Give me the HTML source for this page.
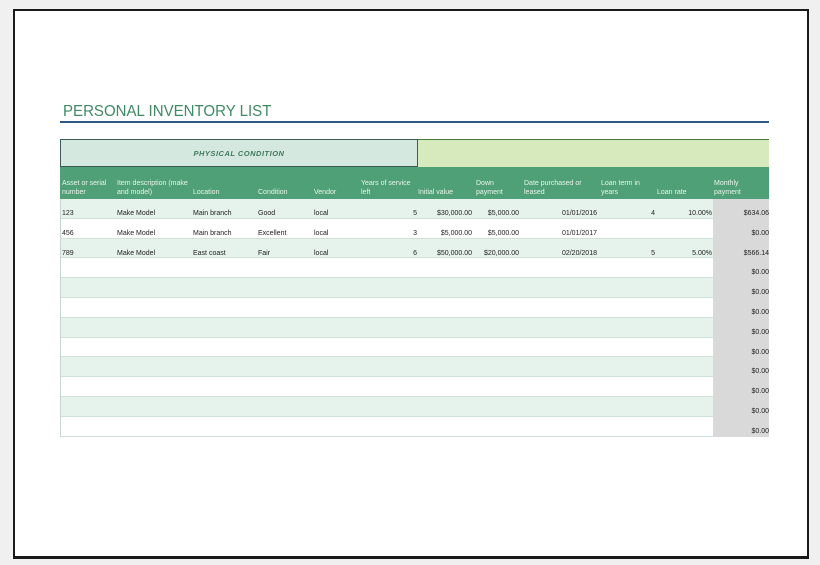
<!DOCTYPE html>
<html><head><style>
*{margin:0;padding:0;box-sizing:border-box}
body{width:820px;height:565px;background:#f0f0f0;position:relative;overflow:hidden;font-family:"Liberation Sans",sans-serif}
#page{position:absolute;left:13px;top:9px;width:796px;height:550px;background:#fff;border:2px solid #1a1a1a;border-right-width:2px;border-bottom-width:3px}
.a{position:absolute}
.t{font-size:7px;color:#222;white-space:nowrap}
.h{font-size:7px;color:#e8f4ec;line-height:9px}
.r{text-align:right}
</style></head><body>
<div id="page"></div>
<div class="a" style="left:63px;top:103px;font-size:16px;color:#3f8a63;transform:scaleX(0.94);transform-origin:left top">PERSONAL INVENTORY LIST</div>
<div class="a" style="left:60px;top:121px;width:709px;height:2px;background:#2e5a86"></div>
<div class="a" style="left:60px;top:139px;width:358px;height:28px;background:#d4e8e0;border:1px solid #3c5c54"></div>
<div class="a" style="left:60px;top:149px;width:358px;text-align:center;font-size:7.5px;font-weight:bold;font-style:italic;color:#3f7a5a;letter-spacing:0.5px">PHYSICAL CONDITION</div>
<div class="a" style="left:418px;top:139px;width:351px;height:28px;background:#d6eabd;border-top:1px solid #4a7a3a"></div>
<div class="a" style="left:60px;top:167px;width:709px;height:32px;background:#50a077"></div>
<div class="a" style="left:60px;top:199px;width:709px;height:238px;border:1px solid #c8d8d0;border-top:none;background:#fff"></div>
<div id="rows"></div>
<div class="a h" style="left:62px;top:179px">Asset or serial<br>number</div>
<div class="a h" style="left:117px;top:179px">Item description (make<br>and model)</div>
<div class="a h" style="left:193px;top:188px">Location</div>
<div class="a h" style="left:258px;top:188px">Condition</div>
<div class="a h" style="left:314px;top:188px">Vendor</div>
<div class="a h" style="left:361px;top:179px">Years of service<br>left</div>
<div class="a h" style="left:418px;top:188px">Initial value</div>
<div class="a h" style="left:476px;top:179px">Down<br>payment</div>
<div class="a h" style="left:524px;top:179px">Date purchased or<br>leased</div>
<div class="a h" style="left:601px;top:179px">Loan term in<br>years</div>
<div class="a h" style="left:657px;top:188px">Loan rate</div>
<div class="a h" style="left:714px;top:179px">Monthly<br>payment</div>
<script>
var h='',y0=199,rh=19.8;
for(var k=0;k<12;k++){var y=y0+k*rh;
 if(k%2==0)h+='<div class="a" style="left:61px;top:'+y+'px;width:652px;height:'+rh+'px;background:#e6f2ec;border-bottom:1px solid #d0e2d8"></div>';
 else h+='<div class="a" style="left:61px;top:'+y+'px;width:652px;height:'+rh+'px;border-bottom:1px solid #d0e2d8"></div>';
}
h+='<div class="a" style="left:713px;top:199px;width:56px;height:238px;background:#d9d9d9"></div>';
var d=[["123","Make Model","Main branch","Good","local","5","$30,000.00","$5,000.00","01/01/2016","4","10.00%","$634.06"],
["456","Make Model","Main branch","Excellent","local","3","$5,000.00","$5,000.00","01/01/2017","","","$0.00"],
["789","Make Model","East coast","Fair","local","6","$50,000.00","$20,000.00","02/20/2018","5","5.00%","$566.14"]];
for(var k=0;k<12;k++){var y=y0+k*rh+11;
 if(k<3){var r=d[k];
  [[62,r[0]],[117,r[1]],[193,r[2]],[258,r[3]],[314,r[4]]].forEach(function(c){h+='<div class="a t" style="left:'+c[0]+'px;top:'+y+'px">'+c[1]+'</div>'});
  [[417,r[5]],[472,r[6]],[519,r[7]],[597,r[8]],[655,r[9]],[712,r[10]]].forEach(function(c){h+='<div class="a t r" style="left:'+(c[0]-80)+'px;width:80px;top:'+y+'px">'+c[1]+'</div>'});
  h+='<div class="a t r" style="left:689px;width:80px;top:'+y+'px">'+r[11]+'</div>';
 } else h+='<div class="a t r" style="left:689px;width:80px;top:'+y+'px">$0.00</div>';
}
document.getElementById('rows').innerHTML=h;
</script>
</body></html>
